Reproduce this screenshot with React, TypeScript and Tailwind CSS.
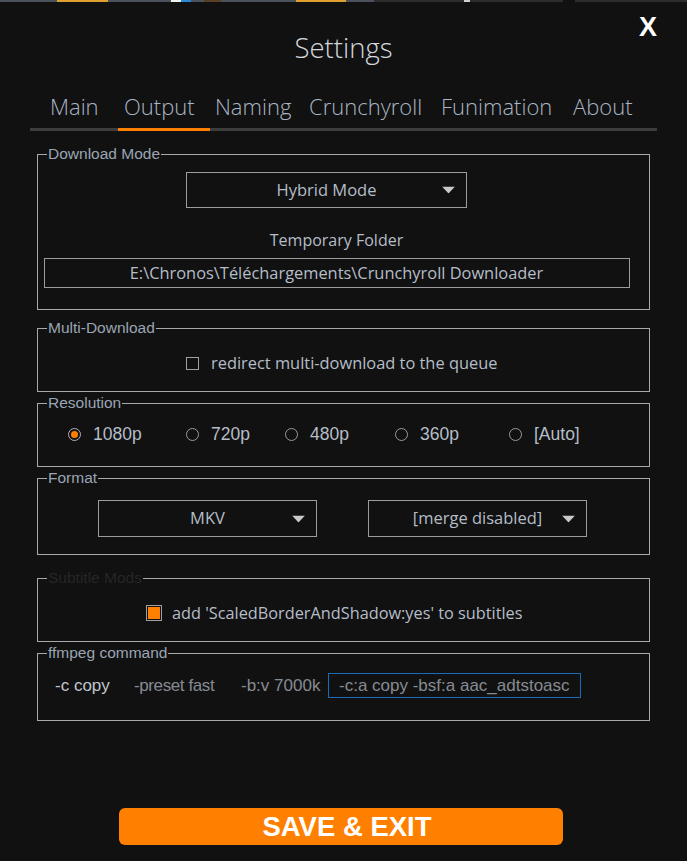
import React, { useState } from 'react';

const font = { fontFamily: '"Open Sans", "Noto Sans", sans-serif' };
const arial = { fontFamily: '"Liberation Sans", Arial, sans-serif' };

const Arrow: React.FC = () => (
  <svg width="13" height="7" viewBox="0 0 13 7" className="shrink-0">
    <path d="M0 0h13L6.5 7z" fill="#c9c9c9" />
  </svg>
);

const Dropdown: React.FC<{ value: string; className: string }> = ({ value, className }) => (
  <div className={`relative flex items-center justify-center border border-[#9c9c9c] text-[16.5px] text-[#b5bdc8] ${className}`}>
    <span>{value}</span>
    <span className="absolute right-[11px] top-1/2 flex -translate-y-1/2">
      <Arrow />
    </span>
  </div>
);

const Group: React.FC<{ title: string; dim?: boolean; className?: string; children: React.ReactNode }> = ({
  title,
  dim,
  className = '',
  children,
}) => (
  <fieldset className={`mx-[37px] border border-[#a9a9a9] px-0 ${className}`}>
    <legend
      className={`ml-[9px] px-[1px] text-[15.5px] leading-[18px] ${dim ? 'text-[#262626]' : 'text-[#9aa5b3]'}`}
      style={arial}
    >
      {title}
    </legend>
    {children}
  </fieldset>
);

const Radio: React.FC<{ checked: boolean }> = ({ checked }) => (
  <span
    className={`flex h-[13px] w-[13px] items-center justify-center rounded-full border ${
      checked ? 'border-[#b0b0b0]' : 'border-[#9a9a9a]'
    }`}
  >
    {checked && <span className="h-[7px] w-[7px] rounded-full bg-[#ff8000]" />}
  </span>
);

const resolutions = [
  { label: '1080p', w: 'w-[118px]' },
  { label: '720p', w: 'w-[99px]' },
  { label: '480p', w: 'w-[110px]' },
  { label: '360p', w: 'w-[114px]' },
  { label: '[Auto]', w: 'w-[80px]' },
];

const tabs = [
  { label: 'Main', w: 'w-[74px]' },
  { label: 'Output', w: 'w-[91px]' },
  { label: 'Naming', w: 'w-[94px]' },
  { label: 'Crunchyroll', w: 'w-[132px]' },
  { label: 'Funimation', w: 'w-[132px]' },
  { label: 'About', w: 'w-[70px]' },
];

// thin strip of the window behind, visible at the very top
const strip = [
  { w: 'w-[57px]', c: 'bg-[#4b525c]' },
  { w: 'w-[51px]', c: 'bg-[#e0a030]' },
  { w: 'w-[63px]', c: 'bg-[#4b525c]' },
  { w: 'w-[10px]', c: 'bg-[#f0f0f0]' },
  { w: 'w-[10px]', c: 'bg-[#2a8ad8]' },
  { w: 'w-[13px]', c: 'bg-[#4b525c]' },
  { w: 'w-[17px]', c: 'bg-[#5a4020]' },
  { w: 'w-[75px]', c: 'bg-[#4b525c]' },
  { w: 'w-[50px]', c: 'bg-[#e0a030]' },
  { w: 'w-[28px]', c: 'bg-[#4b525c]' },
  { w: 'w-[90px]', c: 'bg-[#2c2c2c]' },
  { w: 'w-[6px]', c: 'bg-[#d0d0d0]' },
  { w: 'w-[93px]', c: 'bg-[#2c2c2c]' },
  { w: 'w-[12px]', c: 'bg-[#111111]' },
  { w: 'flex-1', c: 'bg-[#2c2c2c]' },
];

export default function App() {
  const [res, setRes] = useState('1080p');

  return (
    <div className="relative h-[861px] w-[687px] overflow-hidden bg-[#111111]" style={font}>
      <div className="flex h-[2px]">
        {strip.map((s, i) => (
          <div key={i} className={`${s.w} ${s.c} h-full`} />
        ))}
      </div>

      <button
        className="absolute right-[30px] top-[12px] text-[27px] font-bold leading-[30px] text-white"
        style={arial}
      >
        X
      </button>

      <h1 className="mt-[28px] text-center text-[27.5px] font-light leading-[36px] text-[#d4d8de]">Settings</h1>

      <div className="mt-[25px] flex pl-[50px] text-[22px] font-light leading-[30px] text-[#a9b5c3]">
        {tabs.map((t) => (
          <div key={t.label} className={`${t.w} shrink-0`}>
            {t.label}
          </div>
        ))}
      </div>

      <div className="mx-[30px] mt-[7px] h-[3px] bg-[#3d3d3d]">
        <div className="ml-[88px] h-full w-[92px] bg-[#ff8000]" />
      </div>

      <Group title="Download Mode" className="mt-[14px] pb-[21px] pt-[9px]">
        <div className="flex flex-col items-center">
          <Dropdown value="Hybrid Mode" className="h-[36px] w-[281px] -translate-x-[17px]" />
          <div className="mt-[22px] -translate-x-[7px] text-[16px] leading-[20px] text-[#b5bdc8]">Temporary Folder</div>
          <div className="mt-[8px] flex h-[30px] w-[586px] -translate-x-[7px] items-center justify-center border border-[#9c9c9c] text-[16.4px] text-[#b5bdc8]">
            E:\Chronos\Téléchargements\Crunchyroll Downloader
          </div>
        </div>
      </Group>

      <Group title="Multi-Download" className="mt-[9px] h-[73px]">
        <div className="flex items-center pl-[148px] pt-[14px]">
          <span className="h-[13px] w-[13px] border border-[#a0a0a0]" />
          <span className="ml-[12px] text-[16.4px] text-[#b5bdc8]">redirect multi-download to the queue</span>
        </div>
      </Group>

      <Group title="Resolution" className="mt-[2px] h-[73px]">
        <div className="flex items-center pl-[30px] pt-[9px]">
          {resolutions.map((r) => (
            <label
              key={r.label}
              className={`${r.w} flex shrink-0 cursor-pointer items-center`}
              onClick={() => setRes(r.label)}
            >
              <Radio checked={res === r.label} />
              <span className="ml-[12px] text-[17.5px] text-[#b5bdc8]" style={arial}>
                {r.label}
              </span>
            </label>
          ))}
        </div>
      </Group>

      <Group title="Format" className="mt-[2px] pb-[17px] pt-[13px]">
        <div className="flex justify-center gap-[51px] pr-[2px]">
          <Dropdown value="MKV" className="h-[37px] w-[219px]" />
          <Dropdown value="[merge disabled]" className="h-[37px] w-[219px]" />
        </div>
      </Group>

      <Group title="Subtitle Mods" dim className="mt-[14px] h-[73px]">
        <div className="flex items-center pl-[108px] pt-[14px]">
          <span className="flex h-[16px] w-[16px] items-center justify-center border border-[#a0a0a0]">
            <span className="h-[12px] w-[12px] bg-[#ff8000]" />
          </span>
          <span className="ml-[10px] text-[16.3px] text-[#b5bdc8]">add 'ScaledBorderAndShadow:yes' to subtitles</span>
        </div>
      </Group>

      <Group title="ffmpeg command" className="mt-[2px] h-[77px]">
        <div className="flex items-center pl-[17px] pt-[11px] text-[17px]" style={arial}>
          <span className="w-[79px] shrink-0 text-[#c0c6ce]">-c copy</span>
          <span className="w-[107px] shrink-0 tracking-[-0.4px] text-[#868b92]">-preset fast</span>
          <span className="w-[87px] shrink-0 text-[#868b92]">-b:v 7000k</span>
          <span className="flex h-[25px] w-[253px] shrink-0 items-center border border-[#1a6cb8] pl-[10px] text-[#868b92]">
            -c:a copy -bsf:a aac_adtstoasc
          </span>
        </div>
      </Group>

      <button
        className="ml-[119px] mt-[87px] flex h-[37px] w-[444px] items-center justify-center rounded-[6px] bg-[#ff8000] pl-[12px] text-[27.5px] font-bold text-white"
        style={arial}
      >
        SAVE &amp; EXIT
      </button>
    </div>
  );
}
